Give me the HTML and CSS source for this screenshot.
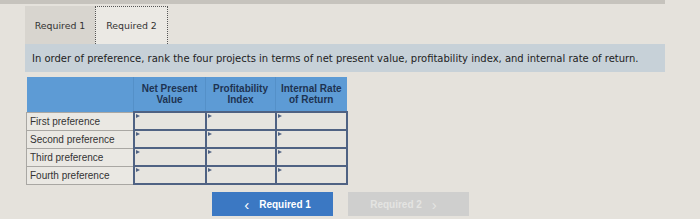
FILE: index.html
```html
<!DOCTYPE html>
<html lang="en">
<head>
    <meta charset="UTF-8">
    <title>Required 2</title>
    <link rel="stylesheet" href="styles.css">
</head>
<body>
    <div class="topbar"></div>
    <div class="page">
        <div class="tabs">
            <div class="tab">Required 1</div>
            <div class="tab active">Required 2</div>
        </div>
        <div class="prompt">In order of preference, rank the four projects in terms of net present value, profitability index, and internal rate of return.</div>

        <table class="rank">
            <tr>
                <th class="blank"></th>
                <th>Net Present<br>Value</th>
                <th>Profitability<br>Index</th>
                <th>Internal Rate<br>of Return</th>
            </tr>
            <tr>
                <td class="label">First preference</td>
                <td class="cell"></td><td class="cell"></td><td class="cell"></td>
            </tr>
            <tr>
                <td class="label">Second preference</td>
                <td class="cell"></td><td class="cell"></td><td class="cell"></td>
            </tr>
            <tr>
                <td class="label">Third preference</td>
                <td class="cell"></td><td class="cell"></td><td class="cell"></td>
            </tr>
            <tr>
                <td class="label">Fourth preference</td>
                <td class="cell"></td><td class="cell"></td><td class="cell"></td>
            </tr>
        </table>

        <div class="nav">
            <div class="btn prev"><span class="arrow">&lsaquo;</span>Required 1</div>
            <div class="btn next">Required 2<span class="arrow">&rsaquo;</span></div>
        </div>
    </div>
</body>
</html>
```

FILE: styles.css
```css
body {
    margin: 0;
    background-color: #e5e2dc;
    font-family: "DejaVu Sans", Verdana, sans-serif;
    color: #2b2b2b;
}
.topbar {
    width: 665px;
    height: 4px;
    background-color: #c6c3bd;
}
.page {
    padding-left: 25px;
}
.tabs {
    display: flex;
    margin-top: 2px;
    height: 38px;
}
.tab {
    display: flex;
    align-items: center;
    justify-content: center;
    width: 70px;
    font-size: 9.4px;
    background-color: #d8d5cf;
    color: #333;
}
.tab.active {
    width: 71px;
    background-color: #ebe9e4;
    border: 1px dotted #555;
    border-bottom: none;
}
.prompt {
    width: 633px;
    height: 28px;
    padding-left: 7px;
    display: flex;
    align-items: center;
    background-color: #c7d1d8;
    font-size: 10px;
    color: #222;
}
.rank {
    margin-top: 5px;
    margin-left: 1px;
    border-collapse: collapse;
    font-family: "Liberation Sans", Arial, sans-serif;
}
.rank th {
    background-color: #5d9bd5;
    color: #1d3352;
    font-size: 10px;
    font-weight: bold;
    height: 35px;
    padding: 0;
    vertical-align: top;
    padding-top: 6px;
    box-sizing: border-box;
    border-left: 1px solid #5490c8;
}
.rank th.blank {
    width: 107px;
    border-left: none;
}
.rank th:nth-child(2) { width: 72px; }
.rank th:nth-child(3) { width: 70px; }
.rank th:nth-child(4) { width: 71px; }
.rank td {
    height: 18px;
    padding: 0;
    box-sizing: border-box;
}
.label {
    font-size: 10px;
    color: #333;
    padding-left: 3px !important;
    background-color: #eae8e3;
    border: 1px solid #a9a7a3;
}
.cell {
    position: relative;
    background-color: #e6e4df;
    border: 2px solid #4f6283;
}
.cell::before {
    content: "";
    position: absolute;
    left: 1px;
    top: 1px;
    border-left: 4px solid #4f6283;
    border-top: 2px solid transparent;
    border-bottom: 2px solid transparent;
}
.nav {
    display: flex;
    gap: 15px;
    margin-top: 7px;
    padding-left: 187px;
}
.btn {
    width: 121px;
    height: 24px;
    display: flex;
    align-items: center;
    justify-content: center;
    font-family: "Liberation Sans", Arial, sans-serif;
    font-size: 10px;
    font-weight: bold;
}
.btn .arrow {
    font-size: 15px;
    font-weight: normal;
    margin: 0 10px;
    line-height: 1;
}
.prev {
    background-color: #3b78c3;
    color: #ffffff;
}
.next {
    background-color: #cfcfce;
    color: #e4e4e2;
}
```
